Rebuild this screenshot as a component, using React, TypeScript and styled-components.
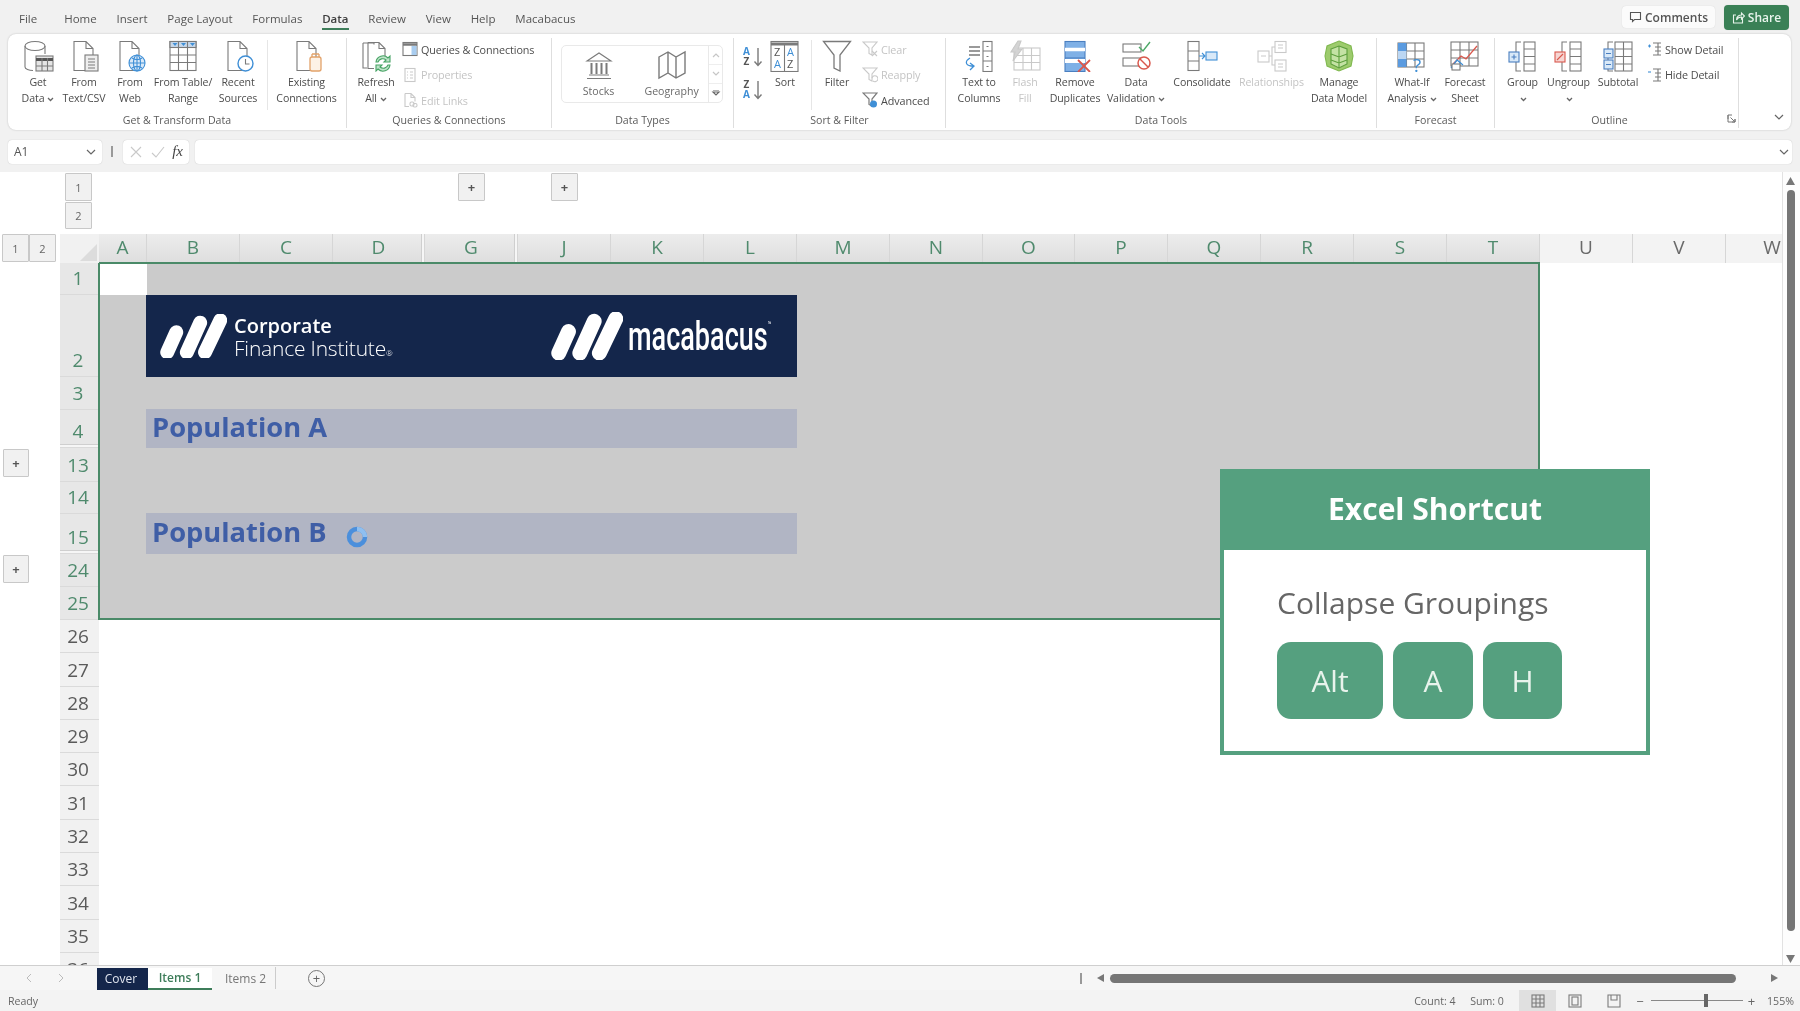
import React from 'react';
import styled, { createGlobalStyle } from 'styled-components';

const GlobalStyle = createGlobalStyle`
  html, body { margin: 0; padding: 0; background: #fff; }
  body { font-family: "Open Sans", "Noto Sans", sans-serif; color: #4a4a4a; }
`;

const UI_FONT = `"Open Sans", "Noto Sans", sans-serif`;
const GREEN = '#55a07f';
const HEADER_GREEN = '#4f8a6d';
const NAVY = '#14264b';

const Page = styled.div`
  width: 1800px;
  height: 1011px;
  display: flex;
  flex-direction: column;
  overflow: hidden;
  filter: blur(0.4px);
`;

/* ---------- icons ---------- */

const Svg = styled.svg<{ $size?: number; $muted?: boolean }>`
  width: ${(p) => p.$size ?? 32}px;
  height: ${(p) => p.$size ?? 32}px;
  display: block;
  flex: none;
  fill: none;
  stroke: ${(p) => (p.$muted ? '#c9c9c9' : '#7a7a7a')};
  stroke-width: 1.1;
`;

const L = ({ children, muted }: { children: React.ReactNode; muted?: boolean }) => (
  <Svg viewBox="0 0 32 32" $muted={muted}>{children}</Svg>
);
const S = ({ children, muted }: { children: React.ReactNode; muted?: boolean }) => (
  <Svg viewBox="0 0 16 16" $size={16} $muted={muted}>{children}</Svg>
);

const SHEET = 'M6 1.5h12l7 7v22H6z M18 1.5v7h7';

const icons: Record<string, React.ReactNode> = {
  getData: (
    <L>
      <ellipse cx="13" cy="6" rx="10" ry="4.5" />
      <path d="M3 6v21c0 2 4 3.5 8 3.5M23 6v8" />
      <rect x="14" y="16" width="17" height="15" fill="#e4e4e4" />
      <path d="M14 19.5h17" stroke="#555" strokeWidth="3" />
      <path d="M14 26h17M20 18v13M25.500 18v13" />
    </L>
  ),
  fromText: (
    <L>
      <path d={SHEET} />
      <rect x="17" y="15" width="13" height="16" fill="#eee" />
      <path d="M20 19h7M20 22h7M20 25h7M20 28h7" />
    </L>
  ),
  fromWeb: (
    <L>
      <path d={SHEET} />
      <circle cx="23" cy="23" r="8" fill="#d9e9f8" stroke="#3f8fd6" />
      <path d="M15 23h16M23 15v16M18 18c3 2 7 2 10 0M18 28c3-2 7-2 10 0" stroke="#3f8fd6" />
      <ellipse cx="23" cy="23" rx="3.500" ry="8" stroke="#3f8fd6" />
    </L>
  ),
  fromTable: (
    <L>
      <rect x="3" y="1.500" width="26" height="29" />
      <rect x="3" y="1.500" width="26" height="6" fill="#c7d8ea" />
      <path d="M3 15h26M3 22.500h26M11.500 1.500v29M20.500 1.500v29" />
      <path d="M5.500 3l2.500 3 2.500-3zM14 3l2.500 3 2.500-3zM23 3l2.500 3 2.500-3z" fill="#3f8fd6" stroke="none" />
    </L>
  ),
  recent: (
    <L>
      <path d={SHEET} />
      <circle cx="23.500" cy="23.500" r="7.500" fill="#fff" stroke="#3f8fd6" strokeWidth="1.400" />
      <path d="M23.500 19v5h4" />
    </L>
  ),
  existing: (
    <L>
      <path d={SHEET} />
      <rect x="19" y="17" width="11" height="14" rx="2" fill="#fdf2e6" stroke="#e2a26a" strokeWidth="1.300" />
      <path d="M21 14v3M28 14v3M21 14h7" stroke="#e2a26a" strokeWidth="1.300" />
    </L>
  ),
  refresh: (
    <L>
      <path d="M3 3h11v1.500M3 3v25h4" />
      <path d="M8 2.500h11l6 6v10M8 2.500v26h6M19 2.500v6h6" />
      <path d="M16 22a7 7 0 0 1 12-4l2-2v6h-6l2-2a5 5 0 0 0-8 2z" fill="#bfe3c9" stroke="#46a364" />
      <path d="M30 25a7 7 0 0 1-12 4l-2 2v-6h6l-2 2a5 5 0 0 0 8-2z" fill="#bfe3c9" stroke="#46a364" />
    </L>
  ),
  queries: (
    <S>
      <rect x="1" y="1.500" width="14" height="13" fill="#fff" />
      <path d="M1 3.500h14" strokeWidth="2.500" />
      <rect x="9.500" y="5" width="5" height="9" fill="#a9cdf0" stroke="none" />
    </S>
  ),
  properties: (
    <S muted>
      <rect x="3" y="1.500" width="10" height="13" />
      <path d="M5 5h1M5 8h1M5 11h1M8 5h3M8 8h3M8 11h3" />
    </S>
  ),
  editLinks: (
    <S muted>
      <path d="M3 1.500h6l4 4v4M9 1.500v4h4M3 1.500v13h4" />
      <rect x="8" y="10" width="4" height="4" rx="1.500" />
      <rect x="11" y="11.500" width="4" height="3.500" rx="1.500" />
    </S>
  ),
  stocks: (
    <L>
      <path d="M4 12L16 4l12 8zM6 26h20M4 29.500h24" />
      <path d="M8.500 14v11M13.500 14v11M18.500 14v11M23.500 14v11" strokeWidth="2" />
    </L>
  ),
  geography: (
    <L>
      <path d="M3 8l9-5 8 5 9-5v21l-9 5-8-5-9 5zM12 3v21M20 8v21" strokeWidth="1.400" />
    </L>
  ),
  sortAZ: (
    <Svg viewBox="0 0 24 24" $size={24}>
      <text x="1" y="10" fontSize="10" fontWeight="700" fill="#3f8fd6" stroke="none" fontFamily={UI_FONT}>A</text>
      <text x="1.500" y="20" fontSize="10" fontWeight="700" fill="#555" stroke="none" fontFamily={UI_FONT}>Z</text>
      <path d="M16 3v17M12.500 16.500l3.500 4 3.500-4" strokeWidth="1.400" />
    </Svg>
  ),
  sortZA: (
    <Svg viewBox="0 0 24 24" $size={24}>
      <text x="1.500" y="10" fontSize="10" fontWeight="700" fill="#555" stroke="none" fontFamily={UI_FONT}>Z</text>
      <text x="1" y="20" fontSize="10" fontWeight="700" fill="#3f8fd6" stroke="none" fontFamily={UI_FONT}>A</text>
      <path d="M16 3v17M12.500 16.500l3.500 4 3.500-4" strokeWidth="1.400" />
    </Svg>
  ),
  sort: (
    <L>
      <rect x="2" y="1.500" width="27" height="30" />
      <path d="M2 4h27" strokeWidth="3" />
      <path d="M15.500 5v26" />
      <text x="5" y="16" fontSize="11" fill="#555" stroke="none" fontFamily={UI_FONT}>Z</text>
      <text x="5" y="28" fontSize="11" fill="#3f8fd6" stroke="none" fontFamily={UI_FONT}>A</text>
      <text x="18" y="16" fontSize="11" fill="#3f8fd6" stroke="none" fontFamily={UI_FONT}>A</text>
      <text x="18" y="28" fontSize="11" fill="#555" stroke="none" fontFamily={UI_FONT}>Z</text>
    </L>
  ),
  filter: (
    <L>
      <path d="M2.500 1.500h27L19 15v16l-6-3V15z" strokeWidth="1.300" />
    </L>
  ),
  clear: (
    <S muted>
      <path d="M1 1h14L10 7v7L7 12.500V7z" />
      <path d="M10 10l5 5M15 10l-5 5" />
    </S>
  ),
  reapply: (
    <S muted>
      <path d="M1 1h14L10 7v7L7 12.500V7z" />
      <path d="M10 11a3 3 0 1 1 1 3" />
    </S>
  ),
  advanced: (
    <S>
      <path d="M1 1h14L10 7v7L7 12.500V7z" strokeWidth="1.200" />
      <circle cx="11.500" cy="12" r="3.500" fill="#3f8fd6" stroke="none" />
    </S>
  ),
  textColumns: (
    <L>
      <rect x="20" y="1.500" width="9" height="30" />
      <path d="M20 11h9M20 21h9" />
      <path d="M24.500 6v1M24.500 16v1M24.500 26v1" strokeWidth="2" />
      <path d="M6 7h11M6 11h11M6 15h11" strokeWidth="1.500" />
      <path d="M7 18c-5 3-5 7 1 8l2 0M7 23l4 3-4 4" stroke="#3f8fd6" strokeWidth="1.300" />
    </L>
  ),
  flash: (
    <L muted>
      <rect x="5" y="8" width="26" height="22" />
      <path d="M5 15.500h26M5 22.500h26M14 8v22M22.500 8v22" />
      <path d="M9 1L2 12h4l-2 9 9-12H9l3-8z" fill="#d4d4d4" />
    </L>
  ),
  removeDup: (
    <L>
      <rect x="6" y="1.500" width="20" height="30" fill="#7fb0e6" stroke="#4a7fc0" />
      <path d="M6 9.500h20" stroke="#fff" strokeWidth="3.500" />
      <path d="M6 18h20" stroke="#4a7fc0" />
      <rect x="6" y="19" width="20" height="4" fill="#fff" stroke="none" />
      <path d="M19 20l12 12M31 20L19 32" stroke="#d9584d" strokeWidth="1.800" />
    </L>
  ),
  validation: (
    <L>
      <rect x="3" y="4" width="18" height="8" />
      <rect x="3" y="18" width="18" height="8" />
      <path d="M19 7l4 4 7-9" stroke="#4da867" strokeWidth="1.400" />
      <circle cx="24" cy="23" r="6" fill="#fff" stroke="#d9584d" strokeWidth="1.500" />
      <path d="M20 19l8 8" stroke="#d9584d" strokeWidth="1.500" />
    </L>
  ),
  consolidate: (
    <L>
      <rect x="2" y="1.500" width="11" height="29" />
      <path d="M2 11h11M2 21h11" />
      <path d="M13 16h6M16 13l3 3-3 3" stroke="#3f8fd6" />
      <rect x="20" y="12" width="11" height="8" fill="#d9e9f8" stroke="#3f8fd6" />
    </L>
  ),
  relationships: (
    <L muted>
      <rect x="2" y="11" width="11" height="11" />
      <rect x="19" y="1.500" width="11" height="11" />
      <rect x="19" y="20" width="11" height="11" />
      <path d="M13 16h3V7h3M16 16v9h3M22 5h5M22 8h5M22 24h5M22 27h5M5 16h5" />
    </L>
  ),
  dataModel: (
    <L>
      <path d="M16 1l12 5 2 10-2 10-12 5-12-5-2-10 2-10z" fill="#9dcb6d" stroke="#7fb84e" />
      <path d="M8 9l8-3 8 3v15l-8 4-8-4z" fill="#c4e2a4" stroke="#5c9e3c" />
      <path d="M16 6v22M8 14l8 3 8-3M8 20l8 3 8-3" stroke="#5c9e3c" />
    </L>
  ),
  whatIf: (
    <L>
      <rect x="2" y="3" width="26" height="24" />
      <path d="M2 11h26M2 19h26M10.500 3v24M19 3v24" />
      <rect x="2" y="3" width="8.500" height="8" fill="#5b9be0" stroke="none" />
      <rect x="2" y="19" width="8.500" height="8" fill="#5b9be0" stroke="none" />
      <rect x="2" y="11" width="8.500" height="8" fill="#bcd7f3" stroke="none" />
      <text x="17" y="32" fontSize="19" fill="#3f8fd6" stroke="none" fontFamily={UI_FONT}>?</text>
    </L>
  ),
  forecast: (
    <L>
      <rect x="2" y="2" width="27" height="24" />
      <path d="M2 10h27M2 18h27M11 2v24M20 2v24" />
      <path d="M4 24l8-8 5 3 11-13" stroke="#d9584d" strokeWidth="1.300" />
      <path d="M2 28l6-8 6 5" stroke="#3f8fd6" strokeWidth="1.300" />
      <rect x="3" y="24" width="8" height="6" fill="#fff" />
    </L>
  ),
  group: (
    <L>
      <path d="M14 2H9v29h5" />
      <rect x="2" y="12" width="10" height="10" fill="#d9e9f8" stroke="#4a7fc0" />
      <path d="M4.500 17h5M7 14.500v5" stroke="#4a7fc0" />
      <rect x="17" y="2" width="11" height="29" />
      <path d="M17 9h11M17 16.500h11M17 24h11" />
    </L>
  ),
  ungroup: (
    <L>
      <path d="M14 2H9v29h5" />
      <rect x="2" y="12" width="10" height="10" fill="#f6d5d2" stroke="#d9584d" />
      <path d="M4 20l6-6" stroke="#d9584d" />
      <rect x="17" y="2" width="11" height="29" />
      <path d="M17 9h11M17 16.500h11M17 24h11" />
    </L>
  ),
  subtotal: (
    <L>
      <path d="M11 2H6v29h5" />
      <rect x="13" y="2" width="17" height="29" />
      <path d="M13 9h17M13 16.500h17M13 24h17M21.500 2v29" />
      <rect x="2" y="9" width="9" height="9" fill="#d9e9f8" stroke="#4a7fc0" />
      <rect x="2" y="20" width="9" height="9" fill="#d9e9f8" stroke="#4a7fc0" />
      <path d="M4 13.500h5M4 24.500h5" stroke="#4a7fc0" />
    </L>
  ),
  showDetail: (
    <S>
      <path d="M6 2h8M8 6h6M8 10h6M6 14h8M11 2v12" />
      <path d="M1 5h3M2.500 3.500v3" stroke="#3f8fd6" />
    </S>
  ),
  hideDetail: (
    <S>
      <path d="M6 2h8M8 6h6M8 10h6M6 14h8M11 2v12" />
      <path d="M1 5h3" stroke="#3f8fd6" />
    </S>
  ),
};

const CaretSvg = styled.svg`
  width: 7px;
  height: 5px;
  margin-left: 3px;
  vertical-align: middle;
  fill: none;
  stroke: #666;
  stroke-width: 1.300;
`;
const Caret = () => (
  <CaretSvg viewBox="0 0 7 5">
    <path d="M1 1l2.500 2.500L6 1" />
  </CaretSvg>
);

/* ---------- title tabs ---------- */

const TabStrip = styled.div`
  height: 34px;
  background: #f1f1f1;
  display: flex;
  align-items: center;
  padding: 0 11px 0 19px;
  font-size: 11.5px;
`;

const MenuTab = styled.span<{ $active?: boolean }>`
  margin-right: 19.800px;
  &:first-child { margin-right: 27px; }
  height: 34px;
  line-height: 37px;
  position: relative;
  font-weight: ${(p) => (p.$active ? 600 : 400)};
  color: ${(p) => (p.$active ? '#3d3d3d' : '#555')};
  ${(p) =>
    p.$active
      ? `&::after { content: ''; position: absolute; left: 0; right: 0; bottom: 4px; height: 2px; background: #3e7d5a; }`
      : ''}
`;

const HeaderActions = styled.div`
  margin-left: auto;
  display: flex;
  align-items: center;
  gap: 9px;
`;

const CommentsButton = styled.div`
  width: 93px;
  height: 22px;
  background: #fbfbfb;
  border-radius: 4px;
  display: flex;
  align-items: center;
  justify-content: center;
  gap: 3px;
  font-size: 12px;
  font-weight: 600;
  color: #555;
  box-shadow: 0 0 1px #ccc;
`;

const ShareButton = styled(CommentsButton)`
  width: 65px;
  height: 25px;
  background: #3a8056;
  color: #e8f3ec;
`;

const HeaderIcon = styled.svg`
  width: 13px;
  height: 13px;
  fill: none;
  stroke: currentColor;
  stroke-width: 1.100;
`;

/* ---------- ribbon ---------- */

const Ribbon = styled.div`
  height: 96px;
  margin: 0 9px 0 8px;
  background: #fff;
  border-radius: 8px;
  box-shadow: 0 0 2px rgba(0, 0, 0, 0.22);
  display: flex;
  flex: none;
  position: relative;
`;

const RibbonBackdrop = styled.div`
  background: #f1f1f1;
  flex: none;
`;

const Group = styled.div<{ $width: number; $last?: boolean }>`
  width: ${(p) => p.$width}px;
  box-sizing: border-box;
  flex: none;
  margin: 4px 0 2px;
  display: flex;
  flex-direction: column;
  border-right: ${(p) => (p.$last ? 'none' : '1px solid #dedede')};
  position: relative;
`;

const GroupBody = styled.div<{ $pad: number }>`
  height: 75px;
  flex: none;
  box-sizing: border-box;
  display: flex;
  padding: 2px 0 0 ${(p) => p.$pad}px;
`;

const GroupLabel = styled.div<{ $inset?: number }>`
  height: 15px;
  line-height: 15px;
  padding-right: ${(p) => p.$inset ?? 0}px;
  text-align: center;
  font-size: 10.6px;
  color: #5b5b5b;
`;

const LargeButton = styled.div<{ $width: number; $muted?: boolean }>`
  width: ${(p) => p.$width}px;
  flex: none;
  display: flex;
  flex-direction: column;
  align-items: center;
  text-align: center;
  font-size: 10.6px;
  line-height: 16px;
  letter-spacing: -0.1px;
  color: ${(p) => (p.$muted ? '#c4c4c4' : '#4c4c4c')};
  white-space: nowrap;
`;

const LargeLabel = styled.div`
  margin-top: 2px;
`;

const Divider = styled.div<{ $gap: number }>`
  width: 1px;
  height: 70px;
  flex: none;
  margin: 0 ${(p) => p.$gap}px;
  background: #e6e6e6;
`;

const SmallColumn = styled.div<{ $margin?: number }>`
  display: flex;
  flex-direction: column;
  gap: 9.500px;
  margin: 1px 0 0 ${(p) => p.$margin ?? 0}px;
`;

const SmallButton = styled.div<{ $muted?: boolean; $gap?: number }>`
  height: 16px;
  display: flex;
  align-items: center;
  gap: ${(p) => p.$gap ?? 3}px;
  font-size: 10.8px;
  letter-spacing: -0.1px;
  white-space: nowrap;
  color: ${(p) => (p.$muted ? '#c4c4c4' : '#4c4c4c')};
`;

const Gallery = styled.div`
  width: 162px;
  height: 58px;
  box-sizing: border-box;
  margin: 5px 0 0 9px;
  display: flex;
  border: 1px solid #e9e9e9;
  border-radius: 5px;
`;

const GalleryItem = styled.div<{ $width: number }>`
  width: ${(p) => p.$width}px;
  display: flex;
  flex-direction: column;
  align-items: center;
  padding-top: 3px;
  font-size: 10.6px;
  line-height: 16px;
  color: #6a6a6a;
  svg { margin-bottom: 2px; }
`;

const GallerySpin = styled.div`
  margin-left: auto;
  width: 13px;
  display: flex;
  flex-direction: column;
  border-left: 1px solid #e9e9e9;
`;

const SpinCell = styled.div<{ $dark?: boolean }>`
  flex: 1;
  display: flex;
  align-items: center;
  justify-content: center;
  border-bottom: 1px solid #eee;
  &:last-child { border-bottom: none; }
  svg { stroke: ${(p) => (p.$dark ? '#666' : '#c6c6c6')}; }
`;

const SortColumn = styled.div`
  width: 22px;
  flex: none;
  display: flex;
  flex-direction: column;
  gap: 9px;
  margin: 5px 0 0 8px;
`;

const DialogLauncher = styled.svg`
  position: absolute;
  right: 2px;
  bottom: 5px;
  width: 9px;
  height: 9px;
  fill: none;
  stroke: #777;
  stroke-width: 1;
`;

const RibbonCollapse = styled.svg`
  position: absolute;
  right: 7px;
  bottom: 9px;
  width: 10px;
  height: 7px;
  fill: none;
  stroke: #666;
  stroke-width: 1.200;
`;

/* ---------- formula bar ---------- */

const FormulaRow = styled.div`
  height: 41px;
  flex: none;
  background: #f1f1f1;
  display: flex;
  align-items: center;
  padding: 1px 8px 0 8px;
`;

const Field = styled.div`
  height: 24px;
  background: #fff;
  border-radius: 4px;
  box-shadow: 0 0 1px rgba(0, 0, 0, 0.25);
  display: flex;
  align-items: center;
`;

const NameBox = styled(Field)`
  width: 94px;
  padding: 0 6px;
  box-sizing: border-box;
  font-size: 12px;
  color: #555;
  justify-content: space-between;
`;

const Grip = styled.div`
  width: 2px;
  height: 11px;
  margin: 0 10px 0 9px;
  background-image: radial-gradient(#999 1px, transparent 1px);
  background-size: 2px 4px;
`;

const FnBox = styled(Field)`
  width: 66px;
  padding: 0 6px;
  box-sizing: border-box;
  justify-content: space-between;
  margin-right: 6px;
`;

const FnLabel = styled.span`
  font-family: "Liberation Serif", serif;
  font-style: italic;
  font-size: 15px;
  color: #444;
`;

const FormulaInput = styled(Field)`
  flex: 1;
  justify-content: flex-end;
  padding-right: 3px;
`;

const Chevron = styled.svg`
  width: 10px;
  height: 6px;
  fill: none;
  stroke: #666;
  stroke-width: 1.200;
`;

/* ---------- sheet ---------- */

const SheetArea = styled.div`
  flex: 1;
  min-height: 0;
  display: flex;
  background: #fff;
`;

const SheetBody = styled.div`
  flex: 1;
  min-width: 0;
  position: relative;
  overflow: hidden;
  border-right: 1px solid #e2e2e2;
`;

const Grid = styled.div<{ $columns: string; $rows: string }>`
  display: grid;
  grid-template-columns: ${(p) => p.$columns};
  grid-template-rows: ${(p) => p.$rows};
`;

const OutlineButton = styled.div<{ $w?: number; $h?: number }>`
  width: ${(p) => p.$w ?? 27}px;
  height: ${(p) => p.$h ?? 28}px;
  box-sizing: border-box;
  background: #f1f1f1;
  border: 1px solid #c8c8c8;
  border-radius: 1px;
  display: flex;
  align-items: center;
  justify-content: center;
  font-size: 11px;
  color: #666;
  flex: none;
`;

const PlusButton = styled(OutlineButton)`
  font-weight: 700;
  font-size: 13px;
  color: #555;
`;

const TopStack = styled.div`
  grid-column: 2;
  grid-row: 1;
  padding: 1px 0 0 5px;
  display: flex;
  flex-direction: column;
  gap: 1px;
`;

const TopPlus = styled.div<{ $col: number }>`
  grid-column: ${(p) => p.$col};
  grid-row: 1;
  justify-self: center;
  padding-top: 1px;
`;

const SidePlus = styled.div<{ $row: number }>`
  grid-column: 1;
  grid-row: ${(p) => p.$row};
  padding: 1px 0 0 3px;
`;

const LevelRow = styled.div`
  grid-column: 1;
  grid-row: 2;
  display: flex;
  padding: 0 0 0 2px;
`;

const Corner = styled.div`
  grid-column: 2;
  grid-row: 2;
  background: #f1f1f1;
  position: relative;
  &::after {
    content: '';
    position: absolute;
    right: 2px;
    bottom: 2px;
    border-style: solid;
    border-width: 0 0 17px 17px;
    border-color: transparent transparent #dcdcdc transparent;
  }
`;

const ColHeader = styled.div<{ $col: number; $selected: boolean; $hiddenNext?: boolean }>`
  grid-column: ${(p) => p.$col};
  grid-row: 2;
  background: ${(p) => (p.$selected ? 'linear-gradient(#ececec, #dedede)' : '#f3f3f3')};
  border-right: 1px solid #d6d6d6;
  box-shadow: ${(p) => (p.$hiddenNext ? 'inset -2px 0 0 #f6f6f6, inset -3px 0 0 #cfcfcf' : 'none')};
  color: ${(p) => (p.$selected ? HEADER_GREEN : '#6a6a6a')};
  display: flex;
  align-items: center;
  justify-content: center;
  padding-bottom: 3px;
  font-size: 19px;
  box-sizing: border-box;
`;

const RowHeader = styled.div<{ $row: number; $selected: boolean; $hiddenNext?: boolean }>`
  grid-column: 2;
  grid-row: ${(p) => p.$row};
  background: ${(p) => (p.$selected ? '#e7e7e7' : '#f1f1f1')};
  border-bottom: 1px solid #dadada;
  box-shadow: ${(p) => (p.$hiddenNext ? 'inset 0 -2px 0 #f6f6f6, inset 0 -3px 0 #cfcfcf' : 'none')};
  color: ${(p) => (p.$selected ? HEADER_GREEN : '#5a5a5a')};
  display: flex;
  align-items: flex-end;
  justify-content: center;
  padding-right: 3px;
  font-size: 19px;
  line-height: 32px;
  box-sizing: border-box;
`;

const Selection = styled.div`
  grid-column: 3 / 19;
  grid-row: 3 / 12;
  background: #cbcbcb;
  box-sizing: border-box;
  border: 2px solid #4a8a68;
  margin: -1px 0 0 -1px;
`;

const ActiveCell = styled.div`
  grid-column: 3;
  grid-row: 3;
  background: #fff;
  margin: 1px 0 0 1px;
`;

const Banner = styled.div`
  grid-column: 4 / 11;
  grid-row: 4;
  margin-left: -1px;
  background: ${NAVY};
  display: flex;
  align-items: center;
  justify-content: space-between;
  padding: 0 25px 0 14px;
  color: #fff;
`;

const BrandLeft = styled.div`
  display: flex;
  align-items: center;
  gap: 7px;
`;

const BrandRight = styled(BrandLeft)`
  gap: 5px;
`;

const CfiName = styled.div`
  padding-top: 7px;
`;

const CfiTop = styled.div`
  font-size: 20px;
  line-height: 22px;
  font-weight: 600;
`;

const CfiBottom = styled.div`
  font-size: 21px;
  line-height: 23px;
  font-weight: 300;
  letter-spacing: -0.2px;
  white-space: nowrap;
`;

const Registered = styled.span`
  font-size: 8px;
`;

const MacaName = styled.span`
  font-family: Roboto, sans-serif;
  font-size: 41px;
  line-height: 46px;
  font-weight: 500;
  display: inline-block;
  width: 144px;
  transform: scaleX(0.66);
  transform-origin: left center;
  white-space: nowrap;
`;

const TradeMark = styled.sup`
  font-size: 9px;
  font-weight: 400;
  vertical-align: 22px;
  line-height: 0;
`;

const Band = styled.div<{ $row: number }>`
  grid-column: 4 / 11;
  grid-row: ${(p) => p.$row};
  margin: -1px 0 0 -1px;
  background: #b1b5c4;
  display: flex;
  align-items: center;
  gap: 19px;
  padding: 0 0 4px 6px;
  font-size: 27.300px;
  font-weight: 700;
  color: #3f5ea6;
`;

const BusyRing = styled.svg`
  width: 22px;
  height: 22px;
  margin-top: 10px;
`;

const Card = styled.div`
  position: absolute;
  left: 1220px;
  top: 297px;
  width: 430px;
  height: 286px;
  box-sizing: border-box;
  border: 4px solid ${GREEN};
  background: #fff;
`;

const CardTitle = styled.div`
  height: 77px;
  padding-bottom: 6px;
  box-sizing: border-box;
  background: ${GREEN};
  color: #fff;
  font-size: 30px;
  font-weight: 700;
  display: flex;
  align-items: center;
  justify-content: center;
`;

const CardBody = styled.div`
  padding: 30px 0 0 53px;
`;

const CardHeading = styled.div`
  font-size: 30px;
  line-height: 46px;
  color: #666;
`;

const Keys = styled.div`
  display: flex;
  gap: 10px;
  margin-top: 16px;
`;

const Key = styled.div<{ $width: number }>`
  width: ${(p) => p.$width}px;
  height: 77px;
  background: ${GREEN};
  border-radius: 14px;
  display: flex;
  align-items: center;
  justify-content: center;
  color: #e8f3ec;
  font-size: 30px;
  font-weight: 400;
`;

const VScroll = styled.div`
  width: 17px;
  flex: none;
  background: #fdfdfd;
  display: flex;
  flex-direction: column;
  align-items: center;
  padding: 5px 2px 2px 0;
  box-sizing: border-box;
`;

const ScrollThumb = styled.div`
  width: 8px;
  flex: 1;
  margin: 5px 0 24px;
  background: #767676;
  border-radius: 4px;
`;

const Arrow = styled.svg`
  width: 9px;
  height: 8px;
  fill: #777;
  flex: none;
`;

/* ---------- sheet tabs and status ---------- */

const SheetTabs = styled.div`
  height: 25px;
  flex: none;
  background: #f6f6f6;
  border-top: 1px solid #cfcfcf;
  box-sizing: border-box;
  display: flex;
  align-items: center;
  font-size: 12px;
`;

const NavArrows = styled.div`
  width: 97px;
  flex: none;
  display: flex;
  gap: 22px;
  padding-left: 25px;
  box-sizing: border-box;
`;

const SheetTab = styled.div<{ $width: number; $kind: 'cover' | 'active' | 'plain' }>`
  width: ${(p) => p.$width}px;
  height: 22px;
  flex: none;
  display: flex;
  align-items: center;
  justify-content: center;
  box-sizing: border-box;
  margin-top: ${(p) => (p.$kind === 'plain' ? '0' : '1px')};
  padding-left: ${(p) => (p.$kind === 'plain' ? '4px' : '0')};
  padding-right: ${(p) => (p.$kind === 'cover' ? '3px' : '0')};
  background: ${(p) => (p.$kind === 'cover' ? NAVY : p.$kind === 'active' ? '#fff' : 'transparent')};
  color: ${(p) => (p.$kind === 'cover' ? '#dfe4ee' : p.$kind === 'active' ? '#3e7d5a' : '#777')};
  font-weight: ${(p) => (p.$kind === 'active' ? 600 : 400)};
  border-bottom: ${(p) => (p.$kind === 'active' ? '2px solid #3e7d5a' : 'none')};
  border-right: ${(p) => (p.$kind === 'plain' ? '1px solid #ccc' : 'none')};
`;

const AddSheet = styled.div`
  width: 15px;
  height: 15px;
  margin-left: 32px;
  border: 1px solid #777;
  border-radius: 50%;
  display: flex;
  align-items: center;
  justify-content: center;
  font-size: 13px;
  line-height: 13px;
  color: #666;
`;

const TabGrip = styled(Grip)`
  margin: 0 0 0 auto;
`;

const HScroll = styled.div`
  width: 704px;
  flex: none;
  display: flex;
  align-items: center;
  padding: 0 21px 0 0;
  margin-left: 14px;
  box-sizing: border-box;
  gap: 5px;
`;

const HThumb = styled.div`
  width: 626px;
  height: 9px;
  flex: none;
  margin-right: 29px;
  background: #767676;
  border-radius: 5px;
`;

const StatusBar = styled.div`
  height: 21px;
  flex: none;
  background: #f3f3f3;
  display: flex;
  align-items: center;
  padding: 0 6px 0 8px;
  font-size: 10.600px;
  color: #666;
`;

const StatusRight = styled.div`
  margin-left: auto;
  display: flex;
  align-items: center;
  height: 100%;
`;

const StatusText = styled.span<{ $width: number }>`
  width: ${(p) => p.$width}px;
  white-space: nowrap;
`;

const ViewButton = styled.div<{ $active?: boolean; $width: number }>`
  width: ${(p) => p.$width}px;
  height: 100%;
  display: flex;
  align-items: center;
  justify-content: center;
  background: ${(p) => (p.$active ? '#e0e0e0' : 'transparent')};
`;

const ZoomTrack = styled.div`
  width: 92px;
  height: 1px;
  margin: 0 5px 0 7px;
  background: #888;
  position: relative;
`;

const ZoomThumb = styled.div`
  position: absolute;
  left: 53px;
  top: -6px;
  width: 4px;
  height: 13px;
  background: #666;
`;

const ZoomSign = styled.span`
  font-size: 13px;
  color: #666;
`;

const ZoomValue = styled.span`
  margin-left: 12px;
`;

const ZoomGroup = styled.div`
  display: flex;
  align-items: center;
  margin-left: 2px;
`;

/* ---------- data ---------- */

const columns = ['A', 'B', 'C', 'D', 'G', 'J', 'K', 'L', 'M', 'N', 'O', 'P', 'Q', 'R', 'S', 'T', 'U', 'V', 'W'];
const columnWidths = [48, 93, 93, 92, 93, 93, 93, 93, 93, 93, 92, 93, 93, 93, 93, 93, 93, 93, 93];
const rows = [
  { n: 1, h: 32 },
  { n: 2, h: 82 },
  { n: 3, h: 33 },
  { n: 4, h: 38, hiddenNext: true },
  { n: 13, h: 34 },
  { n: 14, h: 32 },
  { n: 15, h: 40, hiddenNext: true },
  { n: 24, h: 33 },
  { n: 25, h: 33 },
  ...Array.from({ length: 11 }, (_, i) => ({ n: 26 + i, h: 33.3 })),
];
const menu = ['File', 'Home', 'Insert', 'Page Layout', 'Formulas', 'Data', 'Review', 'View', 'Help', 'Macabacus'];

const Large = ({ icon, width, muted, children }: { icon: string; width: number; muted?: boolean; children: React.ReactNode }) => (
  <LargeButton $width={width} $muted={muted}>
    {icons[icon]}
    <LargeLabel>{children}</LargeLabel>
  </LargeButton>
);

const LogoMark = ({ size }: { size: number }) => (
  <svg viewBox="0 0 70 47" width={size} height={(size * 47) / 70} style={{ display: 'block' }}>
    <path d="M7.500 40L17 19M28 40L42 9M47 40L63 6.500" stroke="#fff" strokeWidth="14.500" strokeLinecap="round" fill="none" />
  </svg>
);

const App = () => (
  <Page>
    <GlobalStyle />
    <TabStrip>
      {menu.map((m) => (
        <MenuTab key={m} $active={m === 'Data'}>{m}</MenuTab>
      ))}
      <HeaderActions>
        <CommentsButton>
          <HeaderIcon viewBox="0 0 13 13"><path d="M1.500 1.500h10v7h-6l-2 2v-2h-2z" /></HeaderIcon>
          Comments
        </CommentsButton>
        <ShareButton>
          <HeaderIcon viewBox="0 0 13 13"><path d="M4 4H1.500v8h9V7M4.500 9c0-4 3-5 5-5V2l3 3-3 3V6c-2 0-4 1-5 3z" /></HeaderIcon>
          Share
        </ShareButton>
      </HeaderActions>
    </TabStrip>

    <RibbonBackdrop>
      <Ribbon>
        <Group $width={339}>
          <GroupBody $pad={8}>
            <Large icon="getData" width={44}>Get<br />Data<Caret /></Large>
            <Large icon="fromText" width={48}>From<br />Text/CSV</Large>
            <Large icon="fromWeb" width={44}>From<br />Web</Large>
            <Large icon="fromTable" width={62}>From Table/<br />Range</Large>
            <Large icon="recent" width={48}>Recent<br />Sources</Large>
            <Divider $gap={5} />
            <Large icon="existing" width={67}>Existing<br />Connections</Large>
          </GroupBody>
          <GroupLabel>Get &amp; Transform Data</GroupLabel>
        </Group>
        <Group $width={205}>
          <GroupBody $pad={7}>
            <Large icon="refresh" width={44}>Refresh<br />All<Caret /></Large>
            <SmallColumn $margin={4}>
              <SmallButton>{icons.queries}Queries &amp; Connections</SmallButton>
              <SmallButton $muted>{icons.properties}Properties</SmallButton>
              <SmallButton $muted>{icons.editLinks}Edit Links</SmallButton>
            </SmallColumn>
          </GroupBody>
          <GroupLabel>Queries &amp; Connections</GroupLabel>
        </Group>
        <Group $width={182}>
          <GroupBody $pad={0}>
            <Gallery>
              <GalleryItem $width={74}>{icons.stocks}Stocks</GalleryItem>
              <GalleryItem $width={74}>{icons.geography}Geography</GalleryItem>
              <GallerySpin>
                <SpinCell><Chevron viewBox="0 0 10 6"><path d="M2 5l3-3 3 3" /></Chevron></SpinCell>
                <SpinCell><Chevron viewBox="0 0 10 6"><path d="M2 1l3 3 3-3" /></Chevron></SpinCell>
                <SpinCell $dark><Chevron viewBox="0 0 10 6"><path d="M2 0h6M2 2l3 3 3-3z" /></Chevron></SpinCell>
              </GallerySpin>
            </Gallery>
          </GroupBody>
          <GroupLabel>Data Types</GroupLabel>
        </Group>
        <Group $width={212}>
          <GroupBody $pad={0}>
            <SortColumn>
              {icons.sortAZ}
              {icons.sortZA}
            </SortColumn>
            <Large icon="sort" width={42}>Sort</Large>
            <Divider $gap={5} />
            <Large icon="filter" width={40}>Filter</Large>
            <SmallColumn $margin={5}>
              <SmallButton $muted>{icons.clear}Clear</SmallButton>
              <SmallButton $muted>{icons.reapply}Reapply</SmallButton>
              <SmallButton>{icons.advanced}Advanced</SmallButton>
            </SmallColumn>
          </GroupBody>
          <GroupLabel>Sort &amp; Filter</GroupLabel>
        </Group>
        <Group $width={431}>
          <GroupBody $pad={9}>
            <Large icon="textColumns" width={48}>Text to<br />Columns</Large>
            <Large icon="flash" width={44} muted>Flash<br />Fill</Large>
            <Large icon="removeDup" width={56}>Remove<br />Duplicates</Large>
            <Large icon="validation" width={66}>Data<br />Validation<Caret /></Large>
            <Large icon="consolidate" width={66}>Consolidate</Large>
            <Large icon="relationships" width={73} muted>Relationships</Large>
            <Large icon="dataModel" width={62}>Manage<br />Data Model</Large>
          </GroupBody>
          <GroupLabel>Data Tools</GroupLabel>
        </Group>
        <Group $width={118}>
          <GroupBody $pad={6}>
            <Large icon="whatIf" width={58}>What-If<br />Analysis<Caret /></Large>
            <Large icon="forecast" width={48}>Forecast<br />Sheet</Large>
          </GroupBody>
          <GroupLabel>Forecast</GroupLabel>
        </Group>
        <Group $width={244}>
          <GroupBody $pad={5}>
            <Large icon="group" width={45}>Group<br /><Caret /></Large>
            <Large icon="ungroup" width={47}>Ungroup<br /><Caret /></Large>
            <Large icon="subtotal" width={52}>Subtotal</Large>
            <SmallColumn $margin={3}>
              <SmallButton $gap={2}>{icons.showDetail}Show Detail</SmallButton>
              <SmallButton $gap={2}>{icons.hideDetail}Hide Detail</SmallButton>
            </SmallColumn>
          </GroupBody>
          <GroupLabel $inset={14}>Outline</GroupLabel>
          <DialogLauncher viewBox="0 0 9 9"><path d="M5 1H1v4M1 1v7h7V5M3.500 3.500L8 8M8 5v3H5" /></DialogLauncher>
        </Group>
        <RibbonCollapse viewBox="0 0 10 7"><path d="M1 1l4 4 4-4" /></RibbonCollapse>
      </Ribbon>
    </RibbonBackdrop>

    <FormulaRow>
      <NameBox>
        A1
        <Chevron viewBox="0 0 10 6"><path d="M1 1l4 4 4-4" /></Chevron>
      </NameBox>
      <Grip />
      <FnBox>
        <Svg viewBox="0 0 14 14" $size={14} $muted><path d="M2 2l10 10M12 2L2 12" /></Svg>
        <Svg viewBox="0 0 14 14" $size={14} $muted><path d="M1 8l4 4 8-10" /></Svg>
        <FnLabel>fx</FnLabel>
      </FnBox>
      <FormulaInput>
        <Chevron viewBox="0 0 10 6"><path d="M1 1l4 4 4-4" /></Chevron>
      </FormulaInput>
    </FormulaRow>

    <SheetArea>
      <SheetBody>
        <Grid
          $columns={`60px 39px ${columnWidths.map((w) => `${w}px`).join(' ')}`}
          $rows={`62px 29px ${rows.map((r) => `${r.h}px`).join(' ')}`}
        >
          <TopStack>
            <OutlineButton>1</OutlineButton>
            <OutlineButton $h={27}>2</OutlineButton>
          </TopStack>
          <TopPlus $col={7}><PlusButton>+</PlusButton></TopPlus>
          <TopPlus $col={8}><PlusButton>+</PlusButton></TopPlus>
          <LevelRow>
            <OutlineButton $w={27}>1</OutlineButton>
            <OutlineButton $w={27}>2</OutlineButton>
          </LevelRow>
          <SidePlus $row={7}><PlusButton $w={26} $h={28}>+</PlusButton></SidePlus>
          <SidePlus $row={10}><PlusButton $w={26} $h={28}>+</PlusButton></SidePlus>
          <Corner />
          {columns.map((c, i) => (
            <ColHeader key={c} $col={i + 3} $selected={i < 16} $hiddenNext={c === 'D' || c === 'G'}>{c}</ColHeader>
          ))}
          {rows.map((r, i) => (
            <RowHeader key={r.n} $row={i + 3} $selected={r.n <= 25} $hiddenNext={r.hiddenNext}>{r.n}</RowHeader>
          ))}
          <Selection />
          <ActiveCell />
          <Banner>
            <BrandLeft>
              <LogoMark size={67} />
              <CfiName>
                <CfiTop>Corporate</CfiTop>
                <CfiBottom>Finance Institute<Registered>®</Registered></CfiBottom>
              </CfiName>
            </BrandLeft>
            <BrandRight>
              <LogoMark size={72} />
              <MacaName>macabacus<TradeMark>™</TradeMark></MacaName>
            </BrandRight>
          </Banner>
          <Band $row={6}>Population A</Band>
          <Band $row={9}>
            Population B
            <BusyRing viewBox="0 0 22 22">
              <circle cx="11" cy="11" r="8" fill="none" stroke="#4b8fdc" strokeWidth="4.500" />
              <path d="M11 3a8 8 0 0 1 8 8" fill="none" stroke="#8fbff0" strokeWidth="4.500" />
            </BusyRing>
          </Band>
        </Grid>
        <Card>
          <CardTitle>Excel Shortcut</CardTitle>
          <CardBody>
            <CardHeading>Collapse Groupings</CardHeading>
            <Keys>
              <Key $width={106}>Alt</Key>
              <Key $width={80}>A</Key>
              <Key $width={79}>H</Key>
            </Keys>
          </CardBody>
        </Card>
      </SheetBody>
      <VScroll>
        <Arrow viewBox="0 0 9 8"><path d="M4.500 0L9 8H0z" /></Arrow>
        <ScrollThumb />
        <Arrow viewBox="0 0 9 8"><path d="M0 0h9L4.500 8z" /></Arrow>
      </VScroll>
    </SheetArea>

    <SheetTabs>
      <NavArrows>
        <Arrow viewBox="0 0 9 8"><path d="M6 0L2 4l4 4" fill="none" stroke="#bbb" /></Arrow>
        <Arrow viewBox="0 0 9 8"><path d="M3 0l4 4-4 4" fill="none" stroke="#bbb" /></Arrow>
      </NavArrows>
      <SheetTab $width={51} $kind="cover">Cover</SheetTab>
      <SheetTab $width={64} $kind="active">Items 1</SheetTab>
      <SheetTab $width={64} $kind="plain">Items 2</SheetTab>
      <AddSheet>+</AddSheet>
      <TabGrip />
      <HScroll>
        <Arrow viewBox="0 0 9 8"><path d="M8 0v8L1 4z" /></Arrow>
        <HThumb />
        <Arrow viewBox="0 0 9 8"><path d="M1 0v8l7-4z" /></Arrow>
      </HScroll>
    </SheetTabs>

    <StatusBar>
      Ready
      <StatusRight>
        <StatusText $width={56}>Count: 4</StatusText>
        <StatusText $width={49}>Sum: 0</StatusText>
        <ViewButton $active $width={37}>
          <Svg viewBox="0 0 14 14" $size={14}><rect x="1" y="1" width="12" height="12" /><path d="M1 5h12M1 9h12M5 1v12M9 1v12" /></Svg>
        </ViewButton>
        <ViewButton $width={38}>
          <Svg viewBox="0 0 14 14" $size={14}><rect x="1" y="1" width="12" height="12" /><rect x="4" y="3" width="6" height="8" /></Svg>
        </ViewButton>
        <ViewButton $width={40}>
          <Svg viewBox="0 0 14 14" $size={14}><path d="M1 1h12v12H1zM4 1v5h6V1" /></Svg>
        </ViewButton>
        <ZoomGroup>
          <ZoomSign>−</ZoomSign>
          <ZoomTrack><ZoomThumb /></ZoomTrack>
          <ZoomSign>+</ZoomSign>
          <ZoomValue>155%</ZoomValue>
        </ZoomGroup>
      </StatusRight>
    </StatusBar>
  </Page>
);

export default App;
